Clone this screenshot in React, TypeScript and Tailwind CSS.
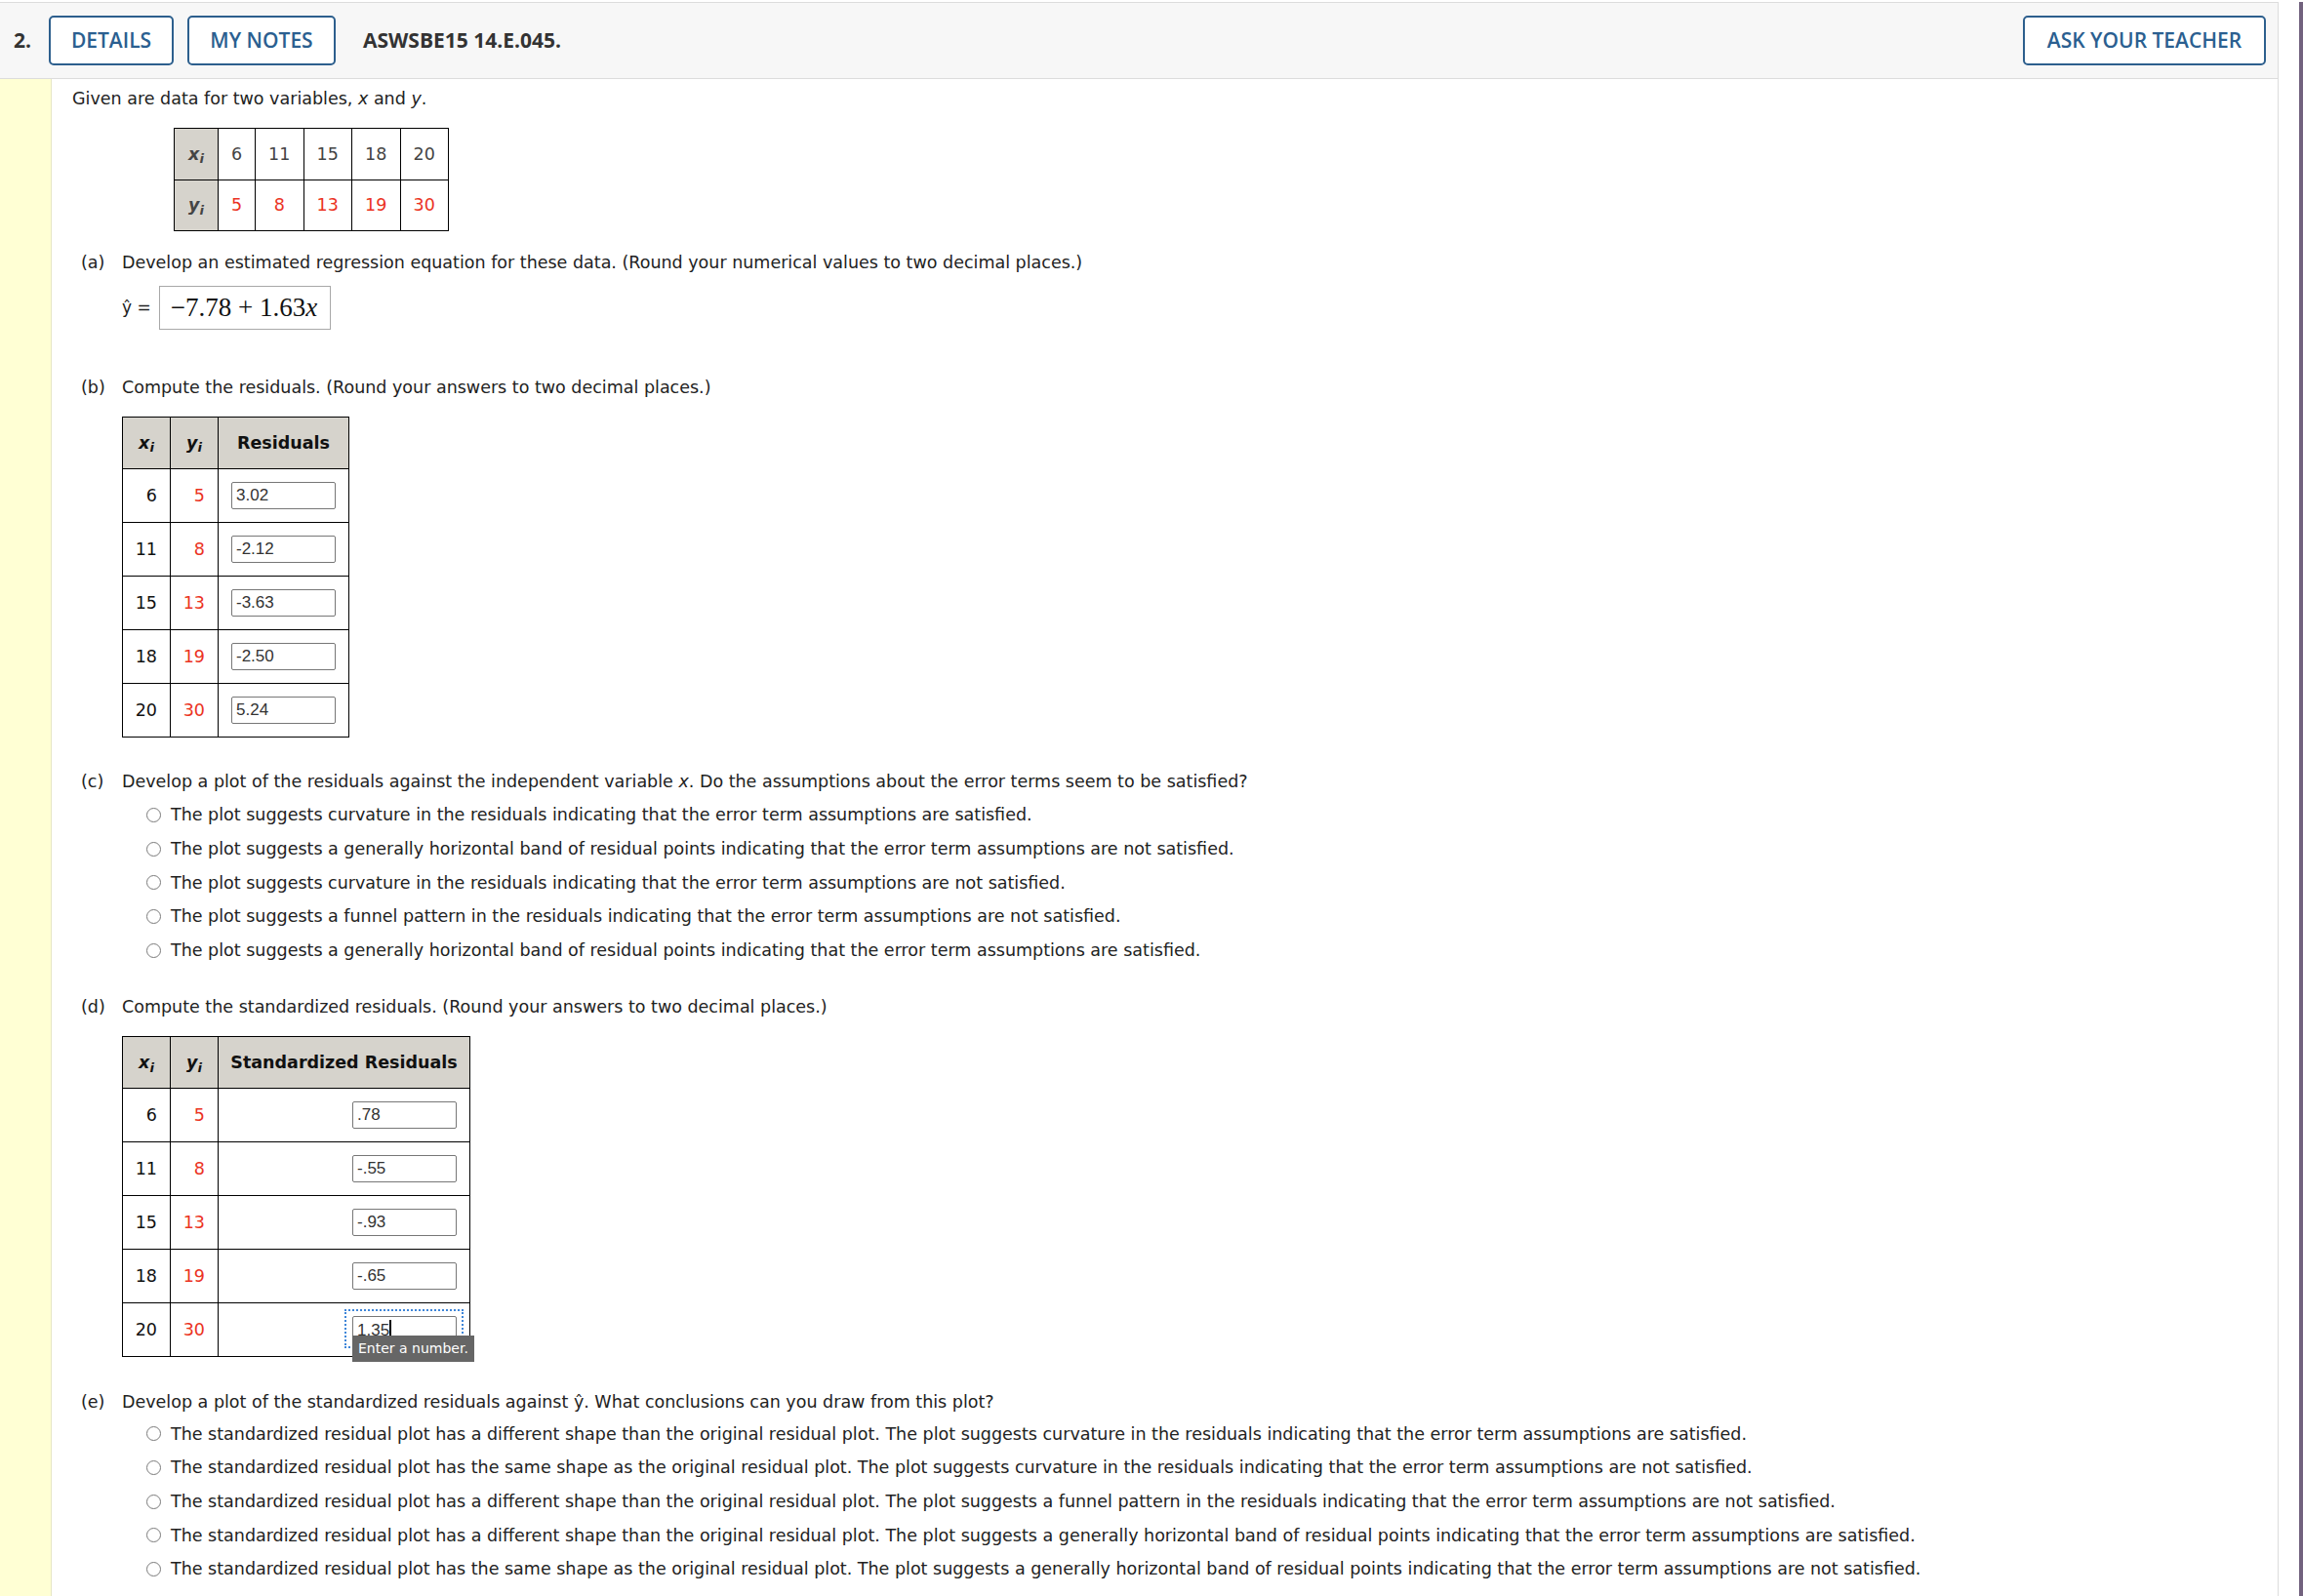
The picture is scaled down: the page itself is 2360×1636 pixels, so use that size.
import React from "react";

const xs = [6, 11, 15, 18, 20];
const ys = [5, 8, 13, 19, 30];
const residuals = ["3.02", "-2.12", "-3.63", "-2.50", "5.24"];
const standardized = [".78", "-.55", "-.93", "-.65"];

const plotChoices = [
  "The plot suggests curvature in the residuals indicating that the error term assumptions are satisfied.",
  "The plot suggests a generally horizontal band of residual points indicating that the error term assumptions are not satisfied.",
  "The plot suggests curvature in the residuals indicating that the error term assumptions are not satisfied.",
  "The plot suggests a funnel pattern in the residuals indicating that the error term assumptions are not satisfied.",
  "The plot suggests a generally horizontal band of residual points indicating that the error term assumptions are satisfied.",
];

const stdChoices = [
  "The standardized residual plot has a different shape than the original residual plot. The plot suggests curvature in the residuals indicating that the error term assumptions are satisfied.",
  "The standardized residual plot has the same shape as the original residual plot. The plot suggests curvature in the residuals indicating that the error term assumptions are not satisfied.",
  "The standardized residual plot has a different shape than the original residual plot. The plot suggests a funnel pattern in the residuals indicating that the error term assumptions are not satisfied.",
  "The standardized residual plot has a different shape than the original residual plot. The plot suggests a generally horizontal band of residual points indicating that the error term assumptions are satisfied.",
  "The standardized residual plot has the same shape as the original residual plot. The plot suggests a generally horizontal band of residual points indicating that the error term assumptions are not satisfied.",
];

function Var({ name }: { name: string }) {
  return (
    <span className="font-bold italic">
      {name}
      <sub>i</sub>
    </span>
  );
}

function Part({ label, children, className = "" }: { label: string; children: React.ReactNode; className?: string }) {
  return (
    <div className={`flex items-center ml-[9px] ${className}`}>
      <span className="w-[42px] shrink-0">({label})</span>
      <span>{children}</span>
    </div>
  );
}

function Choices({ items }: { items: string[] }) {
  return (
    <div className="ml-[25px]">
      {items.map((t) => (
        <div key={t} className="flex h-[34.7px] items-center">
          <span className="w-[15px] h-[15px] shrink-0 rounded-full border border-[#7a7a7a] bg-white" />
          <span className="ml-[10px] whitespace-nowrap">{t}</span>
        </div>
      ))}
    </div>
  );
}

function Field({ value }: { value: string }) {
  return (
    <input
      type="text"
      defaultValue={value}
      className="w-[107px] h-[28px] border border-[#777] rounded-[2px] px-[4px] bg-white text-[17px] text-[#333] font-['Liberation_Sans',Arial,sans-serif] outline-none align-middle"
    />
  );
}

function FocusedField({ value }: { value: string }) {
  return (
    <span className="relative inline-block align-middle">
      <span className="absolute -left-[8px] -right-[7px] -top-[7px] -bottom-[5px] border-2 border-dotted border-[#3f86d8]" />
      <span className="flex items-center w-[107px] h-[28px] border border-[#777] rounded-[2px] px-[4px] bg-white text-[17px] text-[#333] font-['Liberation_Sans',Arial,sans-serif] text-left">
        {value}
        <span className="w-[2px] h-[20px] bg-black" />
      </span>
      <span className="absolute left-0 top-[20px] h-[27px] px-[6px] bg-[#666] text-white text-[14px] leading-[27px] whitespace-nowrap font-['DejaVu_Sans',Verdana,sans-serif] text-left">
        Enter a number.
      </span>
    </span>
  );
}

function ResidualTable({ title, wide }: { title: string; wide: boolean }) {
  return (
    <table className={`table-fixed border-collapse mt-[13px] text-[#111] ${wide ? "w-[356px]" : "w-[232px]"}`}>
      <thead>
        <tr className="h-[53px] bg-[#d6d3cc]">
          <th className="w-[49px] p-0 border border-black font-normal">
            <Var name="x" />
          </th>
          <th className="w-[49px] p-0 border border-black font-normal">
            <Var name="y" />
          </th>
          <th className={`p-0 border border-black font-bold ${wide ? "w-[258px]" : "w-[134px]"}`}>{title}</th>
        </tr>
      </thead>
      <tbody>
        {xs.map((x, i) => (
          <tr key={x} className="h-[55px]">
            <td className="p-0 pr-[13px] border border-black text-right">{x}</td>
            <td className="p-0 pr-[13px] border border-black text-right text-[#eb3323]">{ys[i]}</td>
            {wide ? (
              <td className="p-0 pr-[13px] border border-black text-right">
                {i < 4 ? <Field value={standardized[i]} /> : <FocusedField value="1.35" />}
              </td>
            ) : (
              <td className="p-0 pl-[13px] border border-black text-left">
                <Field value={residuals[i]} />
              </td>
            )}
          </tr>
        ))}
      </tbody>
    </table>
  );
}

export default function App() {
  return (
    <div className="min-h-[1636px] flex bg-white pt-[2px] font-['DejaVu_Sans',Verdana,sans-serif] text-[17.5px] text-[#222]">
      <div className="w-[2335px] flex flex-col border-r border-[#dcdcdc]">
        {/* Question header */}
        <div className="h-[79px] flex items-center border-t border-b border-[#dcdcdc] bg-[#f7f7f7] pl-[14px] pr-[12px] font-['Open_Sans',sans-serif] text-[21px]">
          <span className="font-bold text-[#333]">2.</span>
          <button className="ml-[18px] w-[128px] h-[51px] rounded-[5px] border-2 border-[#2d5f8d] bg-white font-semibold text-[#2b5f90]">
            DETAILS
          </button>
          <button className="ml-[14px] w-[152px] h-[51px] rounded-[5px] border-2 border-[#2d5f8d] bg-white font-semibold text-[#2b5f90]">
            MY NOTES
          </button>
          <span className="ml-[28px] font-bold text-[#333]">ASWSBE15 14.E.045.</span>
          <div className="flex-1" />
          <button className="w-[249px] h-[51px] rounded-[5px] border-2 border-[#2d5f8d] bg-white font-semibold text-[#2b5f90]">
            ASK YOUR TEACHER
          </button>
        </div>

        <div className="flex flex-1">
          <div className="w-[53px] shrink-0 bg-[#ffffd4] border-r border-[#e6e6c4]" />
          <div className="pl-[21px] pb-[20px]">
            <div className="mt-[2px] h-[36px] flex items-center">
              <span>
                Given are data for two variables, <i>x</i> and <i>y</i>.
              </span>
            </div>

            {/* Data table */}
            <table className="table-fixed w-[281px] border-collapse ml-[104px] mt-[12px] text-[#444]">
              <tbody>
                <tr className="h-[53px]">
                  <th className="w-[45px] p-0 border border-black bg-[#d6d3cc] font-normal">
                    <Var name="x" />
                  </th>
                  {xs.map((x, i) => (
                    <td key={x} className={`p-0 border border-black text-center ${i === 0 ? "w-[38px]" : "w-[49.5px]"}`}>
                      {x}
                    </td>
                  ))}
                </tr>
                <tr className="h-[52px]">
                  <th className="p-0 border border-black bg-[#d6d3cc] font-normal">
                    <Var name="y" />
                  </th>
                  {ys.map((y) => (
                    <td key={y} className="p-0 border border-black text-center text-[#eb3323]">
                      {y}
                    </td>
                  ))}
                </tr>
              </tbody>
            </table>

            <Part label="a" className="mt-[15px] h-[34px]">
              Develop an estimated regression equation for these data. (Round your numerical values to two decimal places.)
            </Part>
            <div className="ml-[51px] mt-[7px] flex items-center">
              <span className="text-[17px]">ŷ =</span>
              <span className="ml-[8px] w-[176px] h-[45px] flex items-center pl-[11px] border border-[#a8a8a8] bg-white font-['Liberation_Serif','DejaVu_Serif',serif] text-[27px] text-[#111] whitespace-nowrap">
                −7.78 + 1.63<i>x</i>
              </span>
            </div>

            <Part label="b" className="mt-[42px] h-[34px]">
              Compute the residuals. (Round your answers to two decimal places.)
            </Part>
            <div className="ml-[51px]">
              <ResidualTable title="Residuals" wide={false} />
            </div>

            <Part label="c" className="mt-[28px] h-[34px]">
              Develop a plot of the residuals against the independent variable <i>x</i>. Do the assumptions about the error
              terms seem to be satisfied?
            </Part>
            <div className="ml-[51px]">
              <Choices items={plotChoices} />
            </div>

            <Part label="d" className="mt-[24px] h-[34px]">
              Compute the standardized residuals. (Round your answers to two decimal places.)
            </Part>
            <div className="ml-[51px]">
              <ResidualTable title="Standardized Residuals" wide={true} />
            </div>

            <Part label="e" className="mt-[30px] h-[31px]">
              Develop a plot of the standardized residuals against ŷ. What conclusions can you draw from this plot?
            </Part>
            <div className="ml-[51px]">
              <Choices items={stdChoices} />
            </div>
          </div>
        </div>
      </div>
      <div className="flex-1" />
      <div className="w-[4px] bg-[#72627e]" />
    </div>
  );
}
